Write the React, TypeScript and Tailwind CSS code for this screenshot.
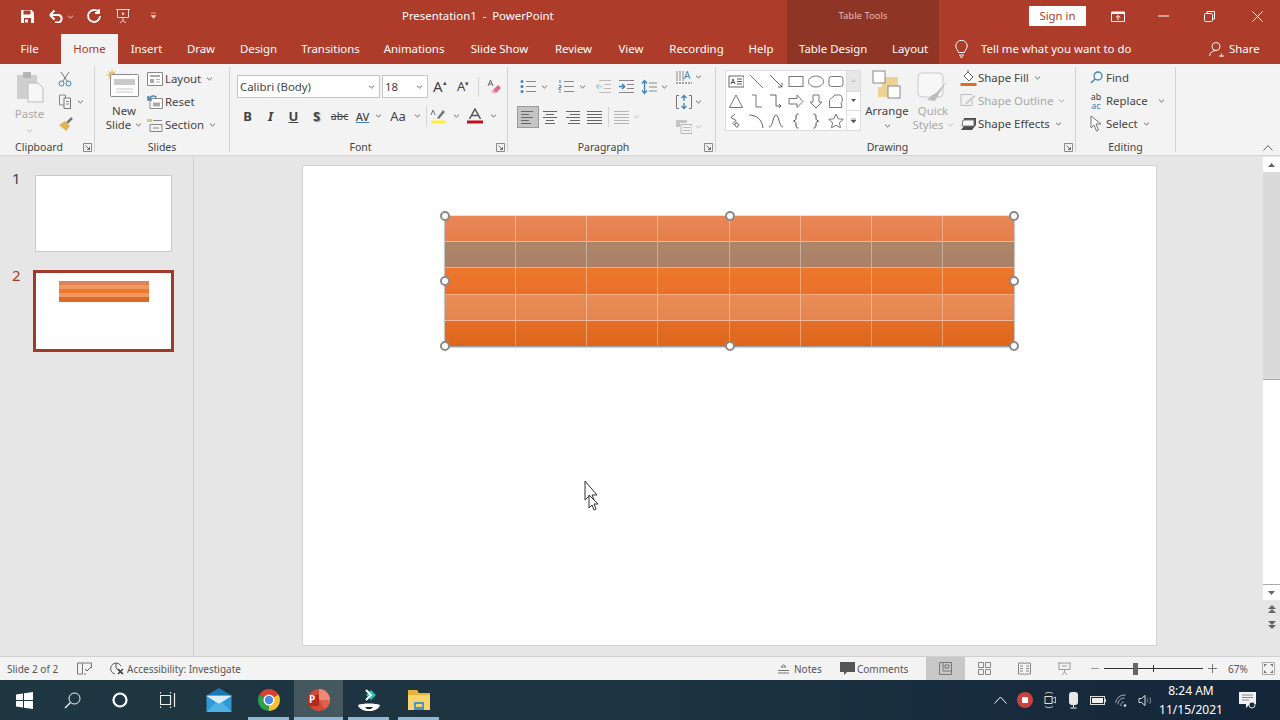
import React from "react";

const S = ({ w, h, vb, children, className = "" }: { w: number; h: number; vb?: string; children: React.ReactNode; className?: string }) => (
  <svg width={w} height={h} viewBox={vb ?? `0 0 ${w} ${h}`} fill="none" className={"shrink-0 " + className}>
    {children}
  </svg>
);

const Chev = ({ c = "#666" }: { c?: string }) => (
  <S w={7} h={4}>
    <path d="M1 .7 3.5 3 6 .7" stroke={c} strokeWidth="1" />
  </S>
);

const Launcher = () => (
  <S w={9} h={9}>
    <path d="M.5.5h8v8h-8z" stroke="#8a8a8a" />
    <path d="M2.5 2.5 6.5 6.5M6.5 4v2.5H4" stroke="#6a6a6a" />
  </S>
);

function Group({ className, label, launcher, children }: { className: string; label: string; launcher?: boolean; children: React.ReactNode }) {
  return (
    <div className={"flex h-full shrink-0 flex-col " + className}>
      <div className="h-[75px] flex">{children}</div>
      <div className="flex h-[16px] items-center">
        <span className="flex-1 text-center text-[10.5px] leading-none text-[#444]">{label}</span>
        {launcher && <span className="flex w-[16px] justify-center pl-[3px]"><Launcher /></span>}
      </div>
    </div>
  );
}

const Sep = () => <div className="my-[3px] w-px shrink-0 bg-[#d3d3d3]" />;

function Row({ icon, text, chev, grey, chevClass = "ml-[5px]" }: { icon: React.ReactNode; text: string; chev?: boolean; grey?: boolean; chevClass?: string }) {
  return (
    <div className={"flex h-[23px] items-center " + (grey ? "text-[#a8a8a8]" : "text-[#444]")}>
      <span className="flex w-[18px] justify-center">{icon}</span>
      <span className="ml-[1px] whitespace-nowrap">{text}</span>
      {chev && <span className={chevClass + " flex"}><Chev c={grey ? "#aaa" : "#666"} /></span>}
    </div>
  );
}

const Lines = ({ kind, c = "#666" }: { kind: "l" | "c" | "r" | "j"; c?: string }) => {
  const rows: [number, number][] = {
    l: [[1, 13], [1, 9], [1, 13], [1, 9], [1, 11]],
    c: [[1, 15], [4, 12], [1, 15], [4, 12], [3, 13]],
    r: [[2, 16], [6, 16], [2, 16], [6, 16], [4, 16]],
    j: [[1, 16], [1, 16], [1, 16], [1, 16], [1, 16]],
  }[kind] as [number, number][];
  return (
    <S w={17} h={16}>
      {rows.map(([a, b], i) => (
        <path key={i} d={`M${a} ${2.5 + i * 3}H${b}`} stroke={c} strokeWidth="1" />
      ))}
    </S>
  );
};

const shapes: React.ReactNode[] = [
  <><rect x="1" y="3" width="15" height="11" stroke="#666" fill="#fff" /><path d="M3 11 5 6l2 5M4 9.5h2M9 6h5M9 8.5h5M9 11h5" stroke="#555" /></>,
  <path d="M2 2 15 15" stroke="#777" />,
  <path d="M2 2 14 14M14 14h-4M14 14v-4" stroke="#666" />,
  <rect x="1" y="3.5" width="14" height="10" stroke="#777" />,
  <ellipse cx="8" cy="8.5" rx="7.5" ry="5.5" stroke="#777" />,
  <rect x="1" y="3.5" width="14" height="10" rx="2.5" stroke="#777" />,
  <path d="M8 2 14.5 14.5h-13z" stroke="#777" />,
  <path d="M4 2h4v12h6" stroke="#777" />,
  <path d="M2 2h6v11h5M13 13l-2-2M13 13l-2 2" stroke="#666" />,
  <path d="M1 5.5h8V2l6 6.5-6 6v-3.5H1z" stroke="#777" />,
  <path d="M5 2h6v7h3l-6 6-6-6h3z" stroke="#777" />,
  <path d="M1.5 14.5V7L7 2h5c3 2 3 6 1 8l1 4.500z" stroke="#777" />,
  <path d="M7 1 3 4.500l5 3-3 3 4 4 2-3-3-2-1 2.500" stroke="#666" />,
  <path d="M1 2c7 0 13 4 14 13" stroke="#666" />,
  <path d="M1 14c4 0 4-12 7-12s3 12 7 12" stroke="#666" />,
  <path d="M10.500 1c-2 0-2.500 1-2.500 3s0 3.500-2.500 4C8 8.500 8 10 8 12s.5 3 2.500 3" stroke="#444" />,
  <path d="M5.500 1c2 0 2.500 1 2.500 3s0 3.500 2.500 4C8 8.500 8 10 8 12s-.5 3-2.500 3" stroke="#444" />,
  <path d="m8 1 2.100 4.800 5.200.5-3.900 3.400 1.100 5.100L8 12.200l-4.500 2.600 1.100-5.100L.7 6.300l5.200-.5z" stroke="#777" />,
];

const tabs: [string, string][] = [
  ["File", "w-[53px] pr-[10px]"],
  ["Home", "w-[57px] bg-[#f3f3f3] text-[#a83a2a]"],
  ["Insert", "w-[57px]"],
  ["Draw", "w-[52px]"],
  ["Design", "w-[63px]"],
  ["Transitions", "w-[81px]"],
  ["Animations", "w-[86px]"],
  ["Slide Show", "w-[85px]"],
  ["Review", "w-[63px]"],
  ["View", "w-[52px]"],
  ["Recording", "w-[79px]"],
  ["Help", "w-[50px]"],
];

const rowColors = [
  "bg-gradient-to-b from-[#e98757] to-[#e57e4a]",
  "bg-gradient-to-b from-[#ad8568] to-[#ab8167]",
  "bg-gradient-to-b from-[#ed772d] to-[#e97029]",
  "bg-gradient-to-b from-[#e98d59] to-[#e5844d]",
  "bg-gradient-to-b from-[#e46f26] to-[#de651c]",
];

const Handle = ({ className }: { className: string }) => (
  <span className={"absolute h-[10px] w-[10px] rounded-full border-2 border-[#8a8a8a] bg-white " + className} />
);

const App = () => (
  <div className="flex h-[720px] w-[1280px] flex-col overflow-hidden bg-[#e6e6e6] font-['Noto_Sans','Liberation_Sans',sans-serif] text-[11.4px] leading-none text-[#444]">
    {/* Title + tabs */}
    <div className="flex h-[64px] shrink-0 bg-[#ae3c2b] text-white">
      <div className="flex w-[787px] shrink-0 flex-col">
        <div className="flex h-[32px] items-center">
          <span className="ml-[20px] flex">
            <S w={15} h={15}><path d="M1 1h10.500L14 3.500V14H1z" fill="#fff" /><path d="M3.500 1.500h7v4h-7z" fill="#ae3c2b" /><path d="M4 9h7v5H4z" fill="#ae3c2b" /><path d="M5 10.500h3v3H5z" fill="#fff" /></S>
          </span>
          <span className="ml-[14px] flex">
            <S w={16} h={14}><path d="M1 6h9a4 4 0 0 1 0 7.500H6M1 6l4.500-4.500M1 6l4.500 4.500" stroke="#fff" strokeWidth="2" /></S>
          </span>
          <span className="ml-[2px] mt-[1px] flex"><Chev c="#f0cfc8" /></span>
          <span className="ml-[12px] flex">
            <S w={16} h={16}><path d="M12.500 4a6 6 0 1 0 1.500 4M13 1v4H9" stroke="#fff" strokeWidth="1.800" /></S>
          </span>
          <span className="ml-[13px] flex">
            <S w={17} h={16}><path d="M1 1.500h14M2.500 1.500v8h11v-8M8 10v2.500M5 15l3-2.500 3 2.500" stroke="#f4dcd7" /><path d="M7 4v3.500l3-1.800z" fill="#f4dcd7" /></S>
          </span>
          <span className="ml-[18px] flex">
            <S w={7} h={8}><path d="M1 1h5M1 3.500h5l-2.500 3z" stroke="#f0cfc8" fill="#f0cfc8" strokeWidth=".7" /></S>
          </span>
          <span className="ml-[245px] whitespace-pre">Presentation1  -  PowerPoint</span>
        </div>
        <div className="flex h-[32px] items-end pl-[8px]">
          {tabs.map(([t, c]) => (
            <span key={t} className={"flex h-[30px] items-center justify-center " + c}>{t}</span>
          ))}
        </div>
      </div>
      <div className="flex w-[152px] shrink-0 flex-col bg-[#8f3526]">
        <div className="flex h-[32px] items-center justify-center text-[9.5px] text-[#e6b6ab]">Table Tools</div>
        <div className="flex h-[32px] items-center pl-[12px] pt-[1px]">
          <span className="w-[67px] whitespace-nowrap">Table Design</span>
          <span className="ml-[26px]">Layout</span>
        </div>
      </div>
      <div className="flex flex-1 flex-col">
        <div className="flex h-[32px] items-center">
          <span className="ml-[90px] flex h-[20px] w-[57px] items-center justify-center bg-white text-[#ae3c2b]">Sign in</span>
          <span className="ml-[25px] flex">
            <S w={14} h={11}><path d="M.5 1h13v9.500H.5z" stroke="#fff" /><path d="M.5 1h13v2H.5z" fill="#fff" /><path d="M7 9V4.500M4.800 6.500 7 4.500l2.200 2" stroke="#fff" /></S>
          </span>
          <span className="ml-[33px] flex"><S w={11} h={2}><path d="M0 1h11" stroke="#fff" /></S></span>
          <span className="ml-[35px] flex">
            <S w={11} h={11}><rect x=".5" y="2.500" width="8" height="8" rx="1" stroke="#fff" /><path d="M3 2V.5h7.500V8H9" stroke="#fff" /></S>
          </span>
          <span className="ml-[37px] flex"><S w={11} h={11}><path d="m.5.5 10 10M10.500.5l-10 10" stroke="#fff" /></S></span>
        </div>
        <div className="flex h-[32px] items-center pt-[1px]">
          <span className="ml-[16px] flex">
            <S w={13} h={18}><path d="M3.500 12.500C3 10 .8 9 .8 6a5.700 5.700 0 0 1 11.400 0c0 3-2.200 4-2.700 6.500zM4 15h5M5 17h3" stroke="#fff" /></S>
          </span>
          <span className="ml-[13px] w-[150px] whitespace-nowrap">Tell me what you want to do</span>
          <span className="ml-[78px] flex">
            <S w={15} h={16}><circle cx="7" cy="5.500" r="4" stroke="#fff" /><path d="M.5 15c.5-3.500 3-5.500 6.500-5.500M10 15h5M12.500 12.500v5" stroke="#fff" /></S>
          </span>
          <span className="ml-[5px]">Share</span>
        </div>
      </div>
    </div>

    {/* Ribbon */}
    <div className="flex h-[92px] shrink-0 border-b border-[#d5d5d5] bg-[#f3f3f3]">
      <Group className="w-[94px]" label="Clipboard" launcher>
        <div className="ml-[14px] mt-[6px] flex w-[31px] flex-col items-center text-[#a8a8a8]">
          <S w={30} h={33}>
            <path d="M2 5h20v24H2z" fill="#cfcfcf" />
            <path d="M8 2h8v6H8z" fill="#b5b5b5" />
            <path d="M13 13h10l5 5v14H13z" fill="#f6f6f6" stroke="#bdbdbd" />
          </S>
          <span className="mt-[5px]">Paste</span>
          <span className="mt-[10px] flex"><Chev c="#b5b5b5" /></span>
        </div>
        <div className="ml-[13px] mt-[3px] flex flex-col">
          <div className="flex h-[23px] items-center">
            <S w={14} h={16}><path d="M3 1l6 9M11 1 5 10" stroke="#777" /><circle cx="3.500" cy="12.500" r="2.500" stroke="#3f83b5" /><circle cx="10.500" cy="12.500" r="2.500" stroke="#3f83b5" /></S>
          </div>
          <div className="flex h-[23px] items-center">
            <S w={14} h={15}><path d="M1.500 1h6v10h-6z" stroke="#888" /><path d="M6 4h6.500v10.500H6z" fill="#f3f3f3" stroke="#777" /><path d="M8 7.500h3M8 10h3" stroke="#888" /></S>
            <span className="ml-[5px] flex"><Chev /></span>
          </div>
          <div className="flex h-[23px] items-center">
            <S w={15} h={15}><path d="M9 6 14 1" stroke="#777" strokeWidth="2.500" /><path d="M7 4l5 5-4 5-7-6z" fill="#e2b54e" /></S>
          </div>
        </div>
      </Group>
      <Sep />
      <Group className="w-[134px]" label="Slides">
        <div className="ml-[10px] mt-[5px] flex w-[38px] flex-col items-center">
          <S w={36} h={30}>
            <circle cx="6" cy="6" r="3.500" fill="#eec46a" />
            <path d="M6 0v12M0 6h12M2 2l8 8M10 2l-8 8" stroke="#eec46a" />
            <rect x="4.500" y="5.500" width="28" height="22" rx="1" fill="#fff" stroke="#8a8a8a" />
            <path d="M8 10h21v6H8z" fill="#c9c9c9" />
            <path d="M10 20h17M10 23h17" stroke="#c5c5c5" />
          </S>
          <span className="mt-[6px]">New</span>
          <span className="mt-[3px] flex items-center whitespace-nowrap">Slide<span className="ml-[4px] flex"><Chev /></span></span>
        </div>
        <div className="ml-[3px] mt-[3px] flex flex-col">
          <Row text="Layout" chev icon={<S w={16} h={14}><path d="M.5.5h15v13H.5z" stroke="#888" fill="#fff" /><path d="M3 3h10v2H3zM3 7h4v4H3z" fill="#aaa" /><path d="M9 7.500h4M9 10h4" stroke="#aaa" /></S>} />
          <Row text="Reset" icon={<S w={16} h={14}><path d="M3 3.500h12.500v10H3z" stroke="#888" fill="#fff" /><path d="M6 7.500h7v4H6z" fill="#aaa" /><path d="M1 5c1.500-4 6-5 8.500-2.500M1 1v4h4" stroke="#3f83b5" strokeWidth="1.500" /></S>} />
          <Row text="Section" chev icon={<S w={16} h={14}><path d="M0 1h5v3H0z" fill="#e9c46f" /><path d="M6 2.500h9M3 6.500h12M3 6.500v7h12v-7M6 10h6" stroke="#888" /></S>} />
        </div>
      </Group>
      <Sep />
      <Group className="w-[277px]" label="Font" launcher>
        <div className="ml-[7px] mt-[11px] flex flex-col">
          <div className="flex h-[23px] items-center">
            <span className="flex h-[23px] w-[143px] items-center justify-between border border-[#c6c6c6] bg-white pl-[2px] pr-[4px]">Calibri (Body)<Chev /></span>
            <span className="ml-[2px] flex h-[23px] w-[46px] items-center justify-between border border-[#c6c6c6] bg-white pl-[2px] pr-[4px]">18<Chev /></span>
            <span className="ml-[5px] flex w-[15px] items-start text-[15px] leading-none">A<span className="text-[7px] leading-none">▴</span></span>
            <span className="ml-[9px] flex w-[15px] items-start text-[13px] leading-none">A<span className="text-[7px] leading-none">▾</span></span>
            <span className="ml-[6px] h-[20px] w-px bg-[#d3d3d3]" />
            <span className="ml-[8px] flex">
              <S w={14} h={16}><path d="M1 7 3.500 1 6 7M2 5h3" stroke="#666" /><path d="m6 11 5-5 3 3-5 5z" fill="#e0688a" /><path d="M4 13l2-2 3 3H6z" fill="#f0a6bb" /></S>
            </span>
          </div>
          <div className="-ml-[1px] mt-[7px] flex h-[22px] items-center text-[13px] text-[#444]">
            <span className="w-[23px] text-center font-bold">B</span>
            <span className="w-[23px] text-center font-bold italic">I</span>
            <span className="w-[23px] text-center font-bold underline">U</span>
            <span className="w-[23px] text-center font-bold [text-shadow:1px_1px_1px_#999]">S</span>
            <span className="w-[23px] text-center text-[10.5px] line-through">abc</span>
            <span className="flex w-[23px] flex-col items-center text-[11px] font-medium leading-none underline decoration-[#3f83b5]">AV</span>
            <span className="flex w-[8px] justify-center"><Chev /></span>
            <span className="w-[32px] text-center">Aa</span>
            <span className="flex w-[6px] justify-center"><Chev /></span>
            <span className="ml-[6px] h-[20px] w-px bg-[#d3d3d3]" />
            <span className="flex w-[22px] justify-center">
              <S w={17} h={16}><path d="M1 12.500h15V15.500H1z" fill="#ffef3a" /><path d="m7 10 6-8 2 2-6 7z" fill="#777" /><path d="M1 7 3 2l2 5" stroke="#777" /></S>
            </span>
            <span className="flex w-[14px] justify-center"><Chev /></span>
            <span className="flex w-[24px] justify-center">
              <S w={16} h={16}><path d="M2.500 11 8 1l5.500 10M4.500 7.500h7" stroke="#555" strokeWidth="1.500" /><path d="M0 12.500h16v3H0z" fill="#c00f1f" /></S>
            </span>
            <span className="flex w-[12px] justify-center"><Chev /></span>
          </div>
        </div>
      </Group>
      <Sep />
      <Group className="w-[207px]" label="Paragraph" launcher>
        <div className="ml-[9px] mt-[11px] flex w-[159px] flex-col">
          <div className="flex h-[23px] items-center pl-[3px]">
            <S w={16} h={15}><circle cx="2" cy="2.500" r="1.500" fill="#3f83b5" /><circle cx="2" cy="7.500" r="1.500" fill="#3f83b5" /><circle cx="2" cy="12.500" r="1.500" fill="#3f83b5" /><path d="M6 2.500h10M6 7.500h10M6 12.500h10" stroke="#888" /></S>
            <span className="ml-[5px] flex"><Chev /></span>
            <span className="ml-[10px] flex">
              <S w={16} h={15}><path d="M2 1v3M1 6.500h2v2H1v2h2M1 13h2" stroke="#3f83b5" /><path d="M6 2.500h10M6 7.500h10M6 12.500h10" stroke="#888" /></S>
            </span>
            <span className="ml-[5px] flex"><Chev /></span>
            <span className="ml-[9px] flex">
              <S w={16} h={15}><path d="M4 1.500h12M9 5.500h7M9 9.500h7M4 13.500h12" stroke="#bbb" /><path d="M7 7.500H1m0 0 3-2.500m-3 2.500L4 10" stroke="#b7cfe0" strokeWidth="1.500" /></S>
            </span>
            <span className="ml-[7px] flex">
              <S w={16} h={15}><path d="M1 1.500h15M9 5.500h7M9 9.500h7M1 13.500h15" stroke="#888" /><path d="M1 7.500h6m0 0L4 5m3 2.500L4 10" stroke="#3f83b5" strokeWidth="1.500" /></S>
            </span>
            <span className="ml-[7px] flex">
              <S w={16} h={16}><path d="M8 4h8M8 8h8M8 12h8" stroke="#888" /><path d="M3.500 2v12M1 4.500 3.500 1.500 6 4.500M1 11.500l2.500 3 2.500-3" stroke="#3f83b5" strokeWidth="1.300" /></S>
            </span>
            <span className="ml-[4px] flex"><Chev /></span>
          </div>
          <div className="mt-[8px] flex h-[22px] items-center">
            <span className="flex h-[22px] w-[22px] items-center justify-center border border-[#9a9a9a] bg-[#c5c5c5]"><Lines kind="l" /></span>
            <span className="flex w-[22px] justify-center"><Lines kind="c" /></span>
            <span className="flex w-[22px] justify-center"><Lines kind="r" /></span>
            <span className="flex w-[23px] justify-center"><Lines kind="j" /></span>
            <span className="ml-[2px] h-[20px] w-px bg-[#d3d3d3]" />
            <span className="ml-[4px] flex"><Lines kind="j" c="#b5b5b5" /></span>
            <span className="ml-[3px] flex"><Chev c="#bbb" /></span>
          </div>
        </div>
        <div className="flex flex-col">
          <div className="flex h-[25px] items-center">
            <S w={17} h={18}><path d="M1 3v10M4 3v10M7 3v10" stroke="#8a8a8a" /><text x="8" y="11" fontSize="10" fill="#3f83b5" fontFamily="Noto Sans">A</text><path d="M0 15h16" stroke="#555" strokeDasharray="2 1" /></S>
            <span className="ml-[2px] flex"><Chev /></span>
          </div>
          <div className="flex h-[25px] items-center">
            <S w={16} h={16}><path d="M3 1.500H.5v13H3M13 1.500h2.500v13H13" stroke="#777" /><path d="M8 2v5M5.500 4 8 1.500 10.500 4M8 14V9M5.500 12 8 14.500 10.500 12" stroke="#3f83b5" strokeWidth="1.300" /></S>
            <span className="ml-[3px] flex"><Chev /></span>
          </div>
          <div className="flex h-[25px] items-center">
            <S w={16} h={15}><path d="M0 1h11v3H4v4H0z" fill="#c4c4c4" /><path d="M5 5.500h11v9H5z" fill="#f3f3f3" stroke="#b5b5b5" /><path d="M7 8.500h7M7 11.500h7" stroke="#bbb" /></S>
            <span className="ml-[3px] flex"><Chev c="#bbb" /></span>
          </div>
        </div>
      </Group>
      <Sep />
      <Group className="w-[359px]" label="Drawing" launcher>
        <div className="ml-[9px] mt-[6px] flex h-[61px] border border-[#dcdcdc]">
          <div className="grid w-[120px] grid-cols-[repeat(6,20px)] grid-rows-[repeat(3,20px)] bg-white">
            {shapes.map((s, i) => (
              <span key={i} className="flex items-center justify-center">
                <S w={16} h={16}>{s}</S>
              </span>
            ))}
          </div>
          <div className="flex w-[14px] flex-col border-l border-[#dcdcdc]">
            <span className="flex h-[20px] items-center justify-center bg-[#e6e6e6]"><S w={5} h={3}><path d="M0 3 2.500 0 5 3z" fill="#c9c9c9" /></S></span>
            <span className="flex h-[20px] items-center justify-center border-t border-[#dcdcdc] bg-white"><S w={5} h={3}><path d="M0 0h5L2.500 3z" fill="#555" /></S></span>
            <span className="flex h-[20px] items-center justify-center border-t border-[#dcdcdc] bg-white"><S w={5} h={6}><path d="M0 0h5M0 2h5L2.500 5z" stroke="#555" fill="#555" strokeWidth=".6" /></S></span>
          </div>
        </div>
        <div className="ml-[5px] mt-[6px] flex w-[42px] flex-col items-center">
          <S w={30} h={30}>
            <path d="M10 7h16v16H10zM6 17h10v10H6z" fill="#ecc97b" opacity=".8" />
            <rect x="1" y="1" width="12" height="12" fill="#fff" stroke="#888" />
            <rect x="16" y="16" width="12" height="12" fill="#fff" stroke="#888" />
          </S>
          <span className="mt-[5px]">Arrange</span>
          <span className="mt-[8px] flex"><Chev /></span>
        </div>
        <div className="ml-[3px] mt-[8px] flex w-[44px] flex-col items-center text-[#a8a8a8]">
          <S w={32} h={30}>
            <rect x="1" y="1" width="25" height="24" rx="4" fill="#f7f7f7" stroke="#c9c9c9" />
            <path d="M30 9 19 21l-4 2-5 5 8 1 4-7z" fill="#bdbdbd" />
          </S>
          <span className="mt-[3px]">Quick</span>
          <span className="mt-[3px] flex items-center">Styles<span className="ml-[3px] flex"><Chev c="#bbb" /></span></span>
        </div>
        <div className="ml-[4px] mt-[2px] flex flex-col">
          <Row text="Shape Fill" chev icon={<S w={17} h={17}><path d="m8 3 5 5-4 4-5-5z" fill="#fff" stroke="#666" /><path d="M8 3V1" stroke="#666" /><path d="M.5 14h16v3H.5z" fill="#d9701f" /></S>} />
          <Row text="Shape Outline" chev grey icon={<S w={17} h={16}><path d="M1 1.500h11M1 1.500v11h11V7" stroke="#bbb" /><path d="m5 10 9-8 1.500 1.500-9 8z" fill="#ccc" /></S>} />
          <Row text="Shape Effects" chev icon={<S w={17} h={14}><path d="M4 1h12v7l-4 5H1l3-4z" fill="#4d4d4d" /><path d="M3 3h11v6H2z" fill="#fff" stroke="#777" /></S>} />
        </div>
      </Group>
      <Sep />
      <Group className="w-[99px]" label="Editing">
        <div className="ml-[11px] mt-[2px] flex flex-col">
          <Row text="Find" icon={<S w={13} h={13}><circle cx="8" cy="5" r="4" stroke="#3f83b5" strokeWidth="1.300" /><path d="M5 8 1 12" stroke="#3f83b5" strokeWidth="1.500" /></S>} />
          <Row text="Replace" chev chevClass="ml-[10px]" icon={<span className="flex flex-col items-center text-[9px] leading-[9px]"><span>ab</span><span className="text-[#3f83b5]">ac</span></span>} />
          <Row text="Select" chev icon={<S w={13} h={17}><path d="M1 1v12l3-3 2.500 6 2-1L6 9h5z" stroke="#777" fill="#fff" /></S>} />
        </div>
      </Group>
      <Sep />
      <div className="flex flex-1 items-end justify-end pb-[4px] pr-[7px]">
        <S w={10} h={6}><path d="m.5 5.500 4.500-5 4.500 5" stroke="#666" /></S>
      </div>
    </div>

    {/* Main */}
    <div className="flex min-h-0 flex-1">
      <div className="w-[194px] shrink-0 border-r border-[#cfcfcf] pt-[19px]">
        <div className="flex h-[81px] items-start">
          <span className="-mt-[2px] ml-[12px] w-[23px] text-[15px] leading-[11px] text-[#444]">1</span>
          <div className="h-[77px] w-[137px] border border-[#c9c9c9] bg-white" />
        </div>
        <div className="mt-[14px] flex h-[82px] items-start">
          <span className="ml-[12px] w-[21px] text-[15px] leading-[11px] text-[#a5382a]">2</span>
          <div className="h-[82px] w-[141px] border-[3px] border-[#a23a2b] bg-white pl-[23px] pt-[8px]">
            <div className="flex h-[21px] w-[90px] flex-col">
              <div className="h-[4px] bg-[#dc8458]" />
              <div className="h-[4px] bg-[#f0985f]" />
              <div className="h-[4px] bg-[#ed772d]" />
              <div className="h-[4px] bg-[#ee9a62]" />
              <div className="h-[5px] bg-[#dc6a28]" />
            </div>
          </div>
        </div>
      </div>
      <div className="relative min-w-0 flex-1 pl-[108px] pt-[9px]">
        <div className="relative h-[481px] w-[855px] border border-[#d3d3d3] bg-white pl-[142px] pt-[50px]">
          <div className="relative w-[569px]">
            <div className="flex h-[130px] flex-col overflow-hidden shadow-[0_1px_2px_rgba(0,0,0,0.5),0_0_1px_rgba(0,0,0,0.4)]">
              {rowColors.map((c, r) => (
                <div key={r} className={"grid flex-1 grid-cols-8 border-b border-white/40 last:border-b-0 " + c}>
                  {[0, 1, 2, 3, 4, 5, 6, 7].map((k) => (
                    <span key={k} className="border-r border-white/35 last:border-r-0" />
                  ))}
                </div>
              ))}
            </div>
            <Handle className="-left-[5px] -top-[5px]" />
            <Handle className="left-[280px] -top-[5px]" />
            <Handle className="-right-[5px] -top-[5px]" />
            <Handle className="-left-[5px] top-[60px]" />
            <Handle className="-right-[5px] top-[60px]" />
            <Handle className="-left-[5px] -bottom-[5px]" />
            <Handle className="left-[280px] -bottom-[5px]" />
            <Handle className="-right-[5px] -bottom-[5px]" />
          </div>
          <span className="absolute left-[281px] top-[314px] flex">
            <S w={18} h={32}>
              <path d="M1 1v19l4-4 3 7 3-1-3-7h5z" fill="#fff" stroke="#333" />
              <path d="M5 15v13l3-3 2 5 2-1-2-5h4z" fill="#fff" stroke="#333" />
            </S>
          </span>
        </div>
      </div>
      <div className="flex w-[17px] shrink-0 flex-col">
        <div className="mt-[1px] flex h-[15px] items-center justify-center bg-white"><S w={7} h={4}><path d="M0 4 3.500 0 7 4z" fill="#666" /></S></div>
        <div className="h-[207px] bg-[#dadada]" />
        <div className="h-[205px] border-t border-[#aaa] bg-white" />
        <div className="flex h-[16px] items-center justify-center border-t border-[#aaa] bg-white"><S w={7} h={4}><path d="M0 0h7L3.500 4z" fill="#666" /></S></div>
        <div className="mt-[1px] flex h-[16px] items-center justify-center"><S w={8} h={8}><path d="M0 4 4 0l4 4zM0 8l4-4 4 4z" fill="#666" /></S></div>
        <div className="flex h-[16px] items-center justify-center"><S w={8} h={8}><path d="M0 0h8L4 4zM0 4h8L4 8z" fill="#666" /></S></div>
      </div>
    </div>

    {/* Status bar */}
    <div className="flex h-[24px] shrink-0 items-center border-t border-[#d0d0d0] bg-[#f3f3f3] pr-[5px] text-[10px] text-[#555]">
      <span className="ml-[7px] w-[52px] whitespace-nowrap">Slide 2 of 2</span>
      <span className="ml-[18px] flex">
        <S w={15} h={13}><path d="M5.500 1H.5v11h5V1h9v5M9 12H7" stroke="#777" /><path d="m8 7 2 2 4-4" stroke="#555" /></S>
      </span>
      <span className="ml-[18px] flex">
        <S w={14} h={14}><path d="M11 4A5.500 5.500 0 1 0 5 12M6 1v5l3 3 3 3" stroke="#555" /><path d="m8 7 5 5M13 7l-5 5" stroke="#444" strokeWidth="1.500" /></S>
      </span>
      <span className="ml-[3px] whitespace-nowrap">Accessibility: Investigate</span>
      <span className="flex-1" />
      <span className="flex">
        <S w={11} h={10}><path d="M0 6.500h11M0 9h11M3 3l2.500-2.500L8 3z" stroke="#777" /></S>
      </span>
      <span className="ml-[5px] w-[26px]">Notes</span>
      <span className="ml-[20px] flex">
        <S w={15} h={13}><path d="M0 0h15v10H7l-3 3v-3H0z" fill="#555" /></S>
      </span>
      <span className="ml-[2px] w-[50px]">Comments</span>
      <span className="ml-[19px] flex h-[23px] w-[39px] items-center justify-center bg-[#c8c8c8]">
        <S w={13} h={13}><path d="M.5.500h12v12H.5zM4 .500V9h8.500M6 3h4v3H6z" stroke="#777" /></S>
      </span>
      <span className="ml-[13px] flex">
        <S w={13} h={13}><path d="M.5.500h5v5h-5zM7.500.500h5v5h-5zM.5 7.500h5v5h-5zM7.500 7.500h5v5h-5z" stroke="#888" /></S>
      </span>
      <span className="ml-[27px] flex">
        <S w={13} h={13}><path d="M.5 1h5.500l.5 1 .5-1h5.500v11H7L6.500 12.500 6 12H.5zM2 4h3M2 6.500h3M2 9h3M8 4h3M8 6.500h3M8 9h3" stroke="#888" /></S>
      </span>
      <span className="ml-[27px] flex">
        <S w={13} h={13}><path d="M0 1h13M1 1v6.500h11V1M6.500 7.500V10M4 13l2.500-3L9 13M4 4h5" stroke="#999" /></S>
      </span>
      <span className="ml-[20px] flex"><S w={8} h={1}><path d="M0 .5h8" stroke="#999" /></S></span>
      <div className="relative ml-[5px] flex h-[12px] w-[99px] items-center">
        <div className="h-px w-full bg-[#333]" />
        <span className="absolute left-[49px] h-[7px] w-px bg-[#333]" />
        <span className="absolute left-[29px] h-[12px] w-[5px] bg-[#666]" />
      </div>
      <span className="ml-[5px] flex"><S w={9} h={9}><path d="M0 4.500h9M4.500 0v9" stroke="#777" /></S></span>
      <span className="ml-[11px] w-[20px]">67%</span>
      <span className="ml-[14px] flex">
        <S w={13} h={13}><path d="M.5.500h12v12H.5z" stroke="#aaa" /><path d="M2 2h3L2 5zM11 2v3L8 2zM2 11V8l3 3zM11 11H8l3-3z" fill="#777" /></S>
      </span>
    </div>

    {/* Taskbar */}
    <div className="flex h-[40px] shrink-0 items-center bg-gradient-to-r from-[#1f3741] via-[#1c3340] to-[#14263a] pr-[24px] text-[12px] text-white">
      <span className="ml-[16px] flex w-[17px] justify-center">
        <S w={17} h={17}><path d="M0 2.500 7 1.500V8H0zM8 1.300 17 0v8H8zM0 9h7v6.500L0 14.500zM8 9h9v8l-9-1.300z" fill="#fff" /></S>
      </span>
      <span className="ml-[31px] flex">
        <S w={17} h={17}><circle cx="10.500" cy="6.500" r="5.500" stroke="#fff" /><path d="M6.500 10.500 1 16" stroke="#fff" strokeWidth="1.300" /></S>
      </span>
      <span className="ml-[31px] flex">
        <S w={16} h={16}><circle cx="8" cy="8" r="6.500" stroke="#fff" strokeWidth="2.200" /></S>
      </span>
      <span className="ml-[32px] flex">
        <S w={16} h={16}><path d="M.5 3.500h10v9H.5zM.5 0v1.500M10.500 0v1.500M.5 14.500V16M10.500 14.500V16M14.500 1v14" stroke="#eee" strokeWidth="1.200" /></S>
      </span>
      <span className="ml-[30px] flex">
        <S w={26} h={24}><path d="M13 0 25.500 7.500H.5z" fill="#1a78b0" /><path d="M.5 8H25.500V24H.5z" fill="#2d9ad6" /><path d="M.5 8 13 16 25.500 8v-.5H.5z" fill="#d9eefa" /><path d="M.5 24 10 14l3 2 3-2 9.500 10z" fill="#4fb1e6" /></S>
      </span>
      <span className="relative ml-[16px] flex h-full w-[41px] items-center justify-center">
        <S w={24} h={24}>
          <path d="M2.500 6.500A11 11 0 0 1 21.500 6.500L12 12z" fill="#d8402f" />
          <path d="M21.500 6.500A11 11 0 0 1 12 23L12 12z" fill="#f5c12e" />
          <path d="M12 23A11 11 0 0 1 2.500 6.500L12 12z" fill="#2f9e4a" />
          <circle cx="12" cy="12" r="5.500" fill="#fff" />
          <circle cx="12" cy="12" r="4.200" fill="#4c8ae8" />
        </S>
        <span className="absolute bottom-0 left-0 right-0 h-[3px] bg-[#8fb8d4]" />
      </span>
      <span className="relative ml-[5px] flex h-full w-[49px] items-center justify-center bg-[#46585f]">
        <S w={24} h={24}>
          <circle cx="12" cy="12" r="11" fill="#d04a3a" />
          <path d="M12 1a11 11 0 0 1 11 11H12z" fill="#ee8a78" />
          <path d="M12 12h11a11 11 0 0 1-5 9z" fill="#e0604c" />
          <rect x="1" y="7" width="11" height="11" rx="1" fill="#b3291c" />
        </S>
        <span className="absolute left-[15px] top-[14px] text-[10px] font-bold leading-[11px] text-white">P</span>
        <span className="absolute bottom-0 left-0 right-0 h-[3px] bg-[#8fb8d4]" />
      </span>
      <span className="relative ml-[5px] flex h-full w-[41px] items-center justify-center">
        <S w={24} h={24}>
          <path d="M9 7 14 2l5 5-5 5z" fill="#2bbfb3" />
          <path d="M9 2l5 5-5 5" stroke="#fff" strokeWidth="2" />
          <path d="M1 17c5-2 17-2 22 0-1 4-6 6-11 6S2 21 1 17z" fill="#fff" />
          <path d="M8 19h8l-2 2h-4z" fill="#222" />
        </S>
        <span className="absolute bottom-0 left-0 right-0 h-[3px] bg-[#8fb8d4]" />
      </span>
      <span className="relative ml-[9px] flex h-full w-[41px] items-center justify-center">
        <S w={22} h={20}>
          <path d="M0 0h9l2 3h11v17H0z" fill="#e8b33a" />
          <path d="M0 5h22v15H0z" fill="#f7d56b" />
          <path d="M6 12h10v8H6z" fill="#4d93c8" />
          <path d="M8 14h6v3H8z" fill="#f7d56b" />
        </S>
        <span className="absolute bottom-0 left-0 right-0 h-[3px] bg-[#8fb8d4]" />
      </span>
      <span className="flex-1" />
      <span className="flex">
        <S w={13} h={8}><path d="M.5 7.500 6.500 1l6 6.500" stroke="#fff" /></S>
      </span>
      <span className="ml-[10px] flex">
        <S w={16} h={16}><circle cx="8" cy="8" r="8" fill="#c9423f" /><rect x="5" y="5" width="6" height="6" rx="1" fill="#fff" /></S>
      </span>
      <span className="ml-[11px] flex">
        <S w={12} h={16}><rect x="1" y="4.500" width="7" height="7" stroke="#ddd" /><path d="m8 7 3.500-2v6L8 9M1 1.500c2-1.500 6-1.500 8 0M1 14.500c2 1.500 6 1.500 8 0" stroke="#bbb" /></S>
      </span>
      <span className="ml-[13px] flex">
        <S w={9} h={17}><rect x="0" y="0" width="9" height="13" rx="3" fill="#e8e8e8" /><path d="M4.500 13v2M1.500 16h6" stroke="#fff" /></S>
      </span>
      <span className="ml-[12px] flex">
        <S w={16} h={9}><rect x=".5" y=".5" width="14" height="8" stroke="#ddd" /><rect x="2" y="2" width="11" height="5" fill="#eee" /><path d="M15.500 3v3" stroke="#ddd" /></S>
      </span>
      <span className="ml-[9px] flex">
        <S w={14} h={13}><path d="M.5 9a9 9 0 0 1 10-8M3 10.500A6 6 0 0 1 9.500 4M6 12a3 3 0 0 1 3-4" stroke="#aab" /><circle cx="10" cy="11.500" r="1.300" fill="#ddd" /></S>
      </span>
      <span className="ml-[9px] flex">
        <S w={15} h={13}><path d="M1 4.500h2.500L7 1.500v10l-3.500-3H1z" stroke="#ddd" /><path d="M9 4.500c1 1 1 3 0 4M11.500 3c1.500 2 1.500 5 0 7" stroke="#7f8c96" /></S>
      </span>
      <div className="ml-[6px] flex w-[64px] flex-col items-center gap-[7px]">
        <span className="whitespace-nowrap">8:24 AM</span>
        <span className="whitespace-nowrap">11/15/2021</span>
      </div>
      <span className="ml-[16px] flex">
        <S w={17} h={17}><path d="M0 0h17v12h-6l-4 4v-4H0z" fill="#f2f2f2" /><path d="M3 3h11M3 5.500h11M3 8h7" stroke="#888" /><circle cx="13" cy="13" r="3" fill="#1a2c3b" stroke="#ddd" /></S>
      </span>
    </div>
  </div>
);

export default App;
